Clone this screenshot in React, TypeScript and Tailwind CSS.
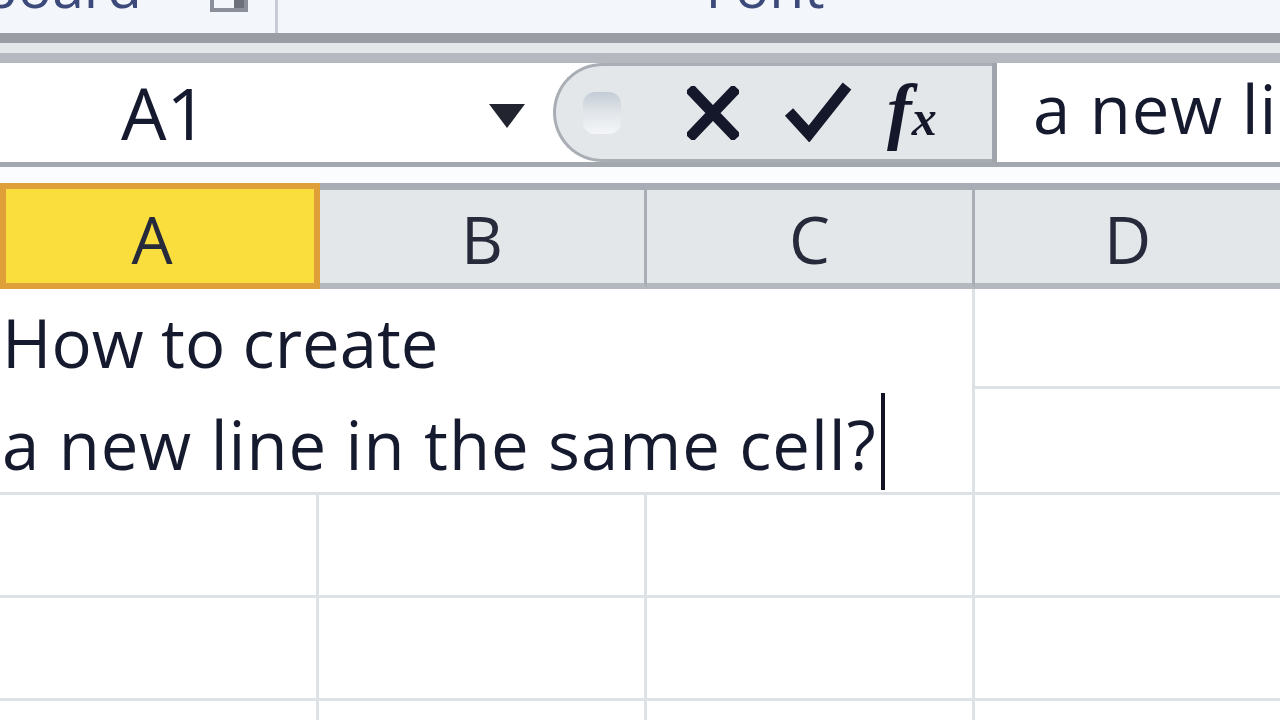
import React from "react";

const FONT = { fontFamily: '"Open Sans", "Noto Sans", sans-serif' };

function HeaderCell({ label, width, last }: { label: string; width: string; last?: boolean }) {
  return (
    <div
      className={`${width} h-full flex items-center justify-center bg-[#e3e7ea] border-t-[7px] border-b-[6px] border-t-[#a8acb4] border-b-[#b4b8bf] ${
        last ? "" : "border-r-[3px] border-r-[#a9adb5]"
      }`}
    >
      <span className="text-[65px] leading-none mt-[6px] text-[#262a3a]">{label}</span>
    </div>
  );
}

function GridRow({ h }: { h: string }) {
  return (
    <>
      <div className="h-[3px] bg-[#dce2e5] shrink-0" />
      <div className={`${h} flex shrink-0`}>
        <div className="w-[316px] bg-white" />
        <div className="w-[3px] bg-[#dce2e5]" />
        <div className="w-[325px] bg-white" />
        <div className="w-[3px] bg-[#dce2e5]" />
        <div className="w-[325px] bg-white" />
        <div className="w-[3px] bg-[#dce2e5]" />
        <div className="flex-1 bg-white" />
      </div>
    </>
  );
}

export default function App() {
  return (
    <div className="w-[1280px] h-[720px] overflow-hidden bg-white flex flex-col" style={FONT}>
      {/* ribbon bottom, group labels cut off */}
      <div className="h-[33px] shrink-0 flex overflow-hidden bg-[#f3f6fa]">
        <div className="w-[275px] flex items-start">
          <span className="w-[142px] text-right text-[57px] leading-none mt-[-42px] text-[#3b4a7a] whitespace-nowrap flex justify-end">
            Clipboard
          </span>
          <svg width="40" height="16" viewBox="0 0 40 16" className="ml-[68px]">
            <rect x="2" y="-8" width="34" height="18" fill="none" stroke="#8a8f99" strokeWidth="4" />
            <rect x="24" y="-2" width="10" height="10" fill="#6b707a" />
          </svg>
        </div>
        <div className="w-[3px] bg-[#c8cdd5]" />
        <div className="flex-1 flex items-start justify-center pr-[28px]">
          <span className="text-[57px] leading-none mt-[-42px] text-[#3b4a7a]">Font</span>
        </div>
      </div>
      <div className="h-[10px] shrink-0 bg-[#9a9da4]" />
      <div className="h-[10px] shrink-0 bg-[#e4e7ea]" />
      <div className="h-[10px] shrink-0 bg-[#b5b8be]" />

      {/* formula bar */}
      <div className="h-[99px] shrink-0 flex">
        <div className="w-[553px] bg-white flex items-start">
          <span className="pl-[121px] text-[72px] leading-[99px] text-[#161a2e]">A1</span>
          <svg width="36" height="24" viewBox="0 0 36 24" className="ml-auto mr-[28px] mt-[41px]">
            <path d="M0 0 H36 L18 24 Z" fill="#222530" />
          </svg>
        </div>
        <div className="w-[439px] bg-[#e3e7ea] rounded-l-[50px] border-y-[3px] border-l-[3px] border-[#a9adb4] flex items-center">
          <div className="ml-[27px] w-[38px] h-[42px] rounded-[12px] bg-gradient-to-b from-[#c3ccd5] via-[#e2e6ea] to-[#f4f6f8]" />
          <svg width="52" height="54" viewBox="0 0 52 54" className="ml-[66px]">
            <path d="M6 6 L46 48 M46 6 L6 48" stroke="#15182a" strokeWidth="11" strokeLinecap="square" />
          </svg>
          <svg width="70" height="62" viewBox="0 0 70 62" className="ml-[44px] mt-[-4px]">
            <path d="M6 32 L26 54 L64 6" fill="none" stroke="#15182a" strokeWidth="11" strokeLinejoin="miter" />
          </svg>
          <span
            className="ml-[34px] text-[#15182a] italic font-bold leading-none mt-[-6px] whitespace-nowrap"
            style={{ fontFamily: '"Liberation Serif", serif' }}
          >
            <span className="text-[74px]">f</span>
            <span className="text-[50px]">x</span>
          </span>
        </div>
        <div className="flex-1 bg-white border-l-[5px] border-[#a0a4ab] overflow-hidden">
          <div className="pl-[36px] text-[67px] leading-[99px] mt-[-4px] tracking-[1px] text-[#161a2e] whitespace-nowrap">
            a new line in the same cell?
          </div>
        </div>
      </div>

      <div className="h-[5px] shrink-0 bg-[#a3a7ae]" />
      <div className="h-[16px] shrink-0 bg-[#fbfcfd]" />

      {/* column headers */}
      <div className="h-[106px] shrink-0 flex">
        <div className="w-[320px] h-full flex items-center justify-center bg-[#f9de3d] border-[6px] border-[#dfa03a] pr-[16px]">
          <span className="text-[65px] leading-none mt-[6px] text-[#262a3a]">A</span>
        </div>
        <HeaderCell label="B" width="w-[327px]" />
        <HeaderCell label="C" width="w-[328px]" />
        <HeaderCell label="D" width="flex-1" last />
      </div>

      {/* grid */}
      <div className="h-[203px] shrink-0 flex">
        <div className="w-[972px] bg-white text-[67px] leading-[102px] pt-[2px] pl-[2px] text-[#161a2e] whitespace-nowrap">
          <div>How to create</div>
          <div className="tracking-[1px]">
            a new line in the same cell?
            <span className="inline-block w-[4px] h-[97px] bg-[#111322] ml-[4px] align-[-20px]" />
          </div>
        </div>
        <div className="w-[3px] bg-[#dce2e5]" />
        <div className="flex-1 flex flex-col">
          <div className="h-[97px] bg-white" />
          <div className="h-[3px] bg-[#dce2e5]" />
          <div className="flex-1 bg-white" />
        </div>
      </div>
      <GridRow h="h-[100px]" />
      <GridRow h="h-[100px]" />
      <GridRow h="h-[100px]" />
    </div>
  );
}
